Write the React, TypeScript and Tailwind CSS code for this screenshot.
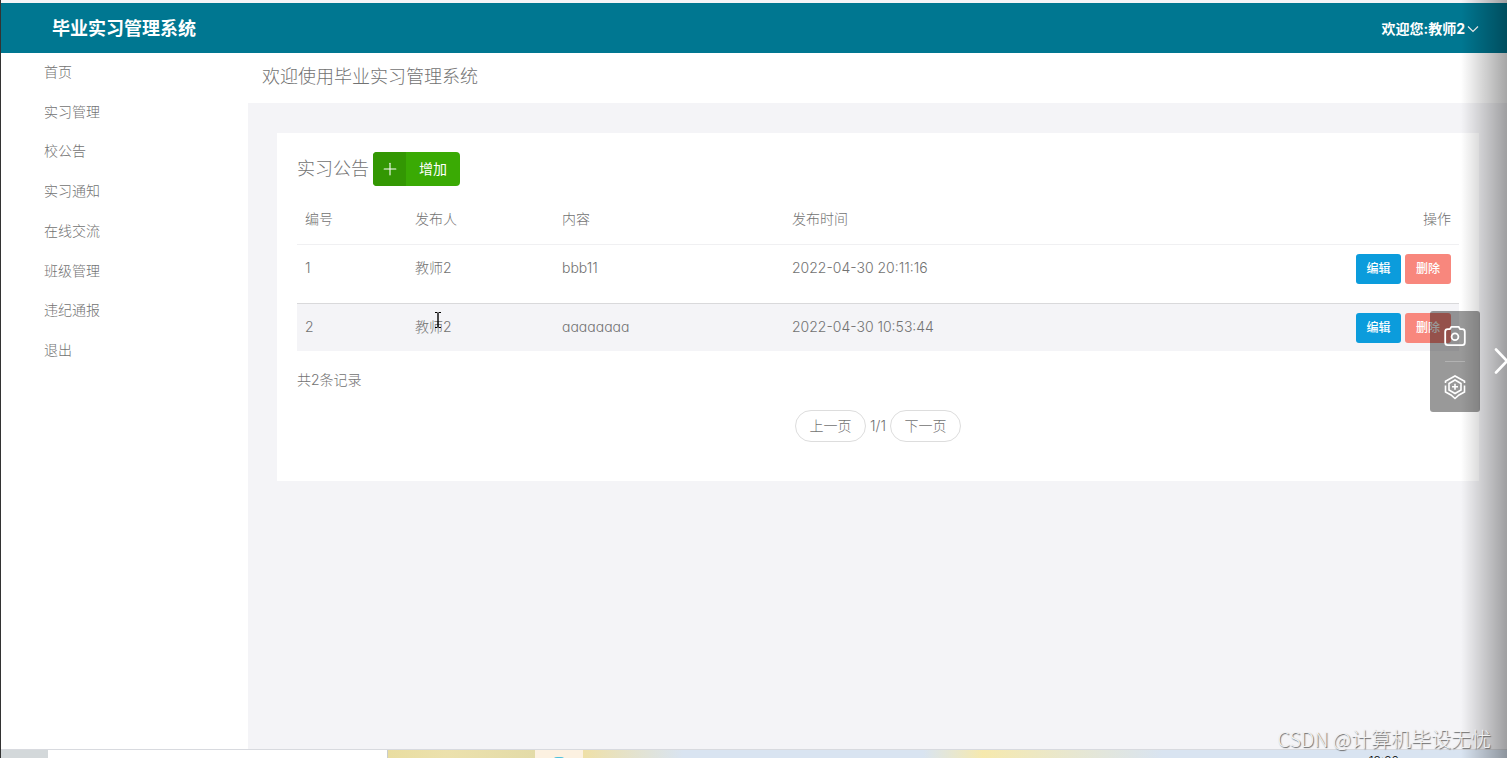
import { Plus } from "lucide-react";

type Notice = {
  id: number;
  author: string;
  content: string;
  time: string;
};

const menu = [
  "首页",
  "实习管理",
  "校公告",
  "实习通知",
  "在线交流",
  "班级管理",
  "违纪通报",
  "退出",
];

const notices: Notice[] = [
  { id: 1, author: "教师2", content: "bbb11", time: "2022-04-30 20:11:16" },
  { id: 2, author: "教师2", content: "aaaaaaaa", time: "2022-04-30 10:53:44" },
];

const Header = () => {
  return (
    <header className="flex h-[50px] items-center justify-between bg-[#007791] pt-0.5 pl-[51px] pr-7 text-white">
      <h1 className="text-lg font-bold">毕业实习管理系统</h1>
      <button type="button" className="flex items-center gap-0.5 text-sm font-bold">
        欢迎您:教师2
        <svg viewBox="0 0 12 8" className="h-2 w-3" fill="none" stroke="currentColor" strokeWidth="1.2">
          <path d="M1 1.5 6 6.5 11 1.5" />
        </svg>
      </button>
    </header>
  );
};

const Sidebar = () => {
  return (
    <nav className="w-[247px] shrink-0 bg-white">
      <ul className="flex h-[316px] flex-col justify-between">
        {menu.map((item) => (
          <li key={item}>
            <a href="#" className="block pl-[43px] text-sm leading-[38px]">
              {item}
            </a>
          </li>
        ))}
      </ul>
    </nav>
  );
};

const NoticeRow = ({ notice }: { notice: Notice }) => {
  const { id, author, content, time } = notice;

  return (
    <tr className="group border-t border-[#d9d9db] align-top first:border-[#f0f0f2] last:bg-[#f4f4f7]">
      <td className="px-2 pt-[13px]">{id}</td>
      <td className="px-2 pt-[13px]">{author}</td>
      <td className="px-2 pt-[13px]">{content}</td>
      <td className="px-2 pt-[13px]">{time}</td>
      <td className="px-2 pt-[9px] pb-[19px] group-last:pb-2">
        <div className="flex justify-end gap-1 text-xs font-medium text-white">
          <button type="button" className="h-[30px] w-[45px] rounded-[3px] bg-[#0b9cdc]">
            编辑
          </button>
          <button type="button" className="h-[30px] w-[46px] rounded-[3px] bg-[#f8877d]">
            删除
          </button>
        </div>
      </td>
    </tr>
  );
};

const NoticeCard = () => {
  return (
    <section className="bg-white px-5 pt-[19px] pb-[39px]">
      <div className="flex h-[34px] items-center gap-1">
        <h2 className="text-lg">实习公告</h2>
        <button
          type="button"
          className="flex h-[34px] items-center overflow-hidden rounded-[4px] bg-[#3aaa04] text-sm font-normal text-white"
        >
          <span className="flex h-full w-[33px] items-center justify-center bg-[#339703]">
            <Plus className="size-5" strokeWidth={1.3} />
          </span>
          <span className="px-[13px]">增加</span>
        </button>
      </div>

      <table className="mt-[9px] w-full table-fixed text-left text-sm">
        <thead>
          <tr className="h-[49px]">
            <th className="w-[110px] px-2 font-light">编号</th>
            <th className="w-[147px] px-2 font-light">发布人</th>
            <th className="w-[230px] px-2 font-light">内容</th>
            <th className="px-2 font-light">发布时间</th>
            <th className="px-2 text-right font-light">操作</th>
          </tr>
        </thead>
        <tbody>
          {notices.map((notice) => (
            <NoticeRow key={notice.id} notice={notice} />
          ))}
        </tbody>
      </table>

      <p className="mt-[19px] text-sm">共{notices.length}条记录</p>

      <div className="mt-5 flex items-center justify-center gap-1 text-sm">
        <button type="button" className="h-8 w-[71px] rounded-full border border-[#dddddd]">
          上一页
        </button>
        <span>1/1</span>
        <button type="button" className="h-8 w-[71px] rounded-full border border-[#dddddd]">
          下一页
        </button>
      </div>
    </section>
  );
};

const CaptureTools = () => {
  return (
    <div className="absolute top-[311px] right-[27px] flex h-[101px] w-[50px] flex-col items-center justify-between rounded-[3px] bg-black/40 text-white">
      <button type="button" aria-label="截图" className="flex h-[50px] w-full items-center justify-center">
        <svg viewBox="0 0 24 24" className="size-6" fill="none" stroke="currentColor" strokeWidth="1.8" strokeLinejoin="round">
          <path d="M6.8 5.2 8.4 2.8H15.6L17.2 5.2H19.3Q21.8 5.2 21.8 7.7V18.5Q21.8 21.2 19.3 21.2H4.7Q2.2 21.2 2.2 18.5V7.7Q2.2 5.2 4.7 5.2Z" />
          <circle cx="12" cy="12.8" r="3.4" />
        </svg>
      </button>
      <span className="h-px w-5 bg-white/25" />
      <button type="button" aria-label="防护" className="flex h-[50px] w-full items-center justify-center">
        <svg viewBox="0 0 24 26" className="h-[26px] w-6" fill="none" stroke="currentColor" strokeWidth="1.6">
          <path d="M2.5 9V7.2L12 2 21.5 7.2V9M2.5 11.5V18L8 21 12 24.5 16 21 21.5 18V11.5" />
          <path d="M12 6 18 9.5V16L12 19.5 6 16V9.5Z" />
          <path d="M12 9.8V15.8M9 12.8H15" />
        </svg>
      </button>
    </div>
  );
};

const Taskbar = () => {
  return (
    <footer className="flex h-[9px] overflow-hidden border-t border-[#d8dadf] bg-[#d9e4f1]">
      <div className="w-[47px] bg-[#d3d8da]" />
      <div className="w-[340px] border-r border-[#c9cdce] bg-white" />
      <div className="w-[147px] bg-linear-to-r from-[#e9dda0] via-[#ece1ad] via-40% to-[#e3dba8]" />
      <div className="flex w-12 justify-center bg-[#fcf1e1]">
        <span className="mt-[7px] h-1 w-3 rounded-t-full bg-[#4fc0dc]" />
      </div>
      <div className="w-[100px] bg-linear-to-r from-[#efe0a7] to-[#d9e4f1]" />
      <div className="w-[240px]" />
      <div className="w-[240px] bg-linear-to-r from-[#d9e4f1] via-[#f6e9ad] via-25% to-[#d9e4f1]" />
      <time className="ml-auto pr-[108px] pt-[3px] text-xs leading-4 text-black">13:20</time>
    </footer>
  );
};

export default function App() {
  return (
    <div className="relative flex min-h-screen flex-col overflow-hidden border-l border-[#333333] bg-[#f4f4f7] pt-[3px] font-['Inter','Noto_Sans_CJK_SC',sans-serif] font-light text-[#727272] [font-feature-settings:'cv11']">
      <Header />
      <div className="flex flex-1">
        <Sidebar />
        <main className="flex-1">
          <div className="h-[50px] bg-white px-[14px] text-lg leading-[48px]">
            欢迎使用毕业实习管理系统
          </div>
          <div className="px-7 pt-[30px] pl-[29px]">
            <NoticeCard />
          </div>
        </main>
      </div>
      <Taskbar />

      {/* shade along the right edge */}
      <div className="pointer-events-none absolute inset-y-0 right-0 w-[46px] bg-linear-to-r from-transparent to-black/35" />
      <CaptureTools />
      <svg viewBox="0 0 14 30" className="absolute top-[346px] right-0 h-[30px] w-[14px]" fill="none" stroke="white" strokeWidth="2.6" strokeLinecap="round">
        <path d="M3 3.5 14 15 3 26.5" />
      </svg>
      {/* text cursor */}
      <svg viewBox="0 0 8 16" className="absolute top-[312px] left-[433px] h-4 w-2" fill="none" stroke="black">
        <path d="M1 .5H3.5M4.5 .5H7M1 15.5H3.5M4.5 15.5H7" />
        <path d="M4 1V15" strokeWidth="1.4" />
      </svg>
      <div className="absolute right-4 bottom-1 font-['Noto_Sans_CJK_SC',sans-serif] text-xl leading-[30px] text-[#f2f2f2] [text-shadow:1px_1px_1px_#666]">
        CSDN @计算机毕设无忧
      </div>
    </div>
  );
}
